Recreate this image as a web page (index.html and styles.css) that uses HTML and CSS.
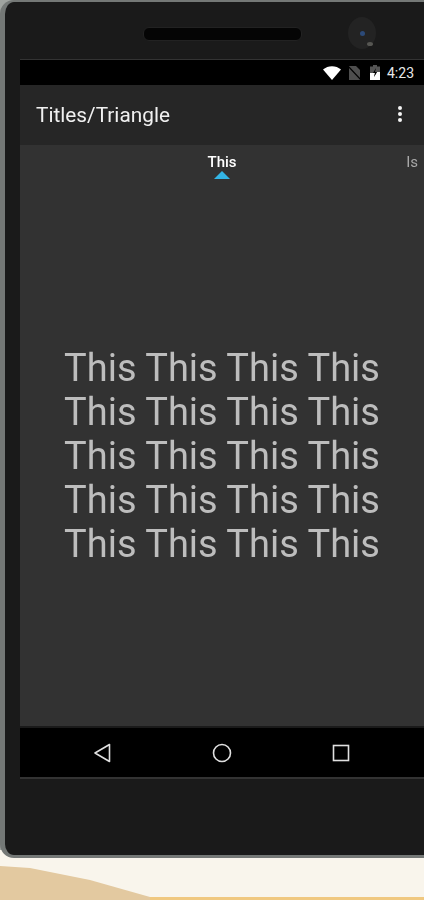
FILE: index.html
```html
<!DOCTYPE html>
<html lang="en">
<head>
<meta charset="utf-8">
<title>Titles/Triangle</title>
<link rel="stylesheet" href="styles.css">
</head>
<body>
<div class="desktop">
  <svg class="dunes" viewBox="0 0 424 50" preserveAspectRatio="none" aria-hidden="true">
    <rect width="424" height="50" fill="#f9f5ec"/>
    <polygon points="0,16 30,18 90,30 150,47 150,50 0,50" fill="#e3c9a0"/>
    <polygon points="150,47 424,47 424,50 150,50" fill="#f0c880"/>
  </svg>
  <div class="device">
    <div class="bezel-top">
      <div class="speaker"></div>
      <div class="camera"><div class="lens"></div><div class="glint"></div></div>
    </div>
    <div class="screen">
      <div class="status-bar">
        <svg class="ic-wifi" viewBox="0 0 18 14"><path d="M0 3.500C5-1 13-1 18 3.500L9 14z" fill="#fff"/></svg>
        <svg class="ic-sim" viewBox="0 0 13 14"><path d="M1 0h7l4 4v10H1z" fill="#4e4e4e"/><path d="M0 0l13 14" stroke="#000" stroke-width="1.200"/></svg>
        <svg class="ic-batt" viewBox="0 0 10 15"><path d="M3 0h4v1.500h3V15H0V1.500h3z" fill="#555"/><path d="M0 8h5l-1 4 3-5h3v8H0z" fill="#fff"/><path d="M6 3L3 8h2l-1 4 3-5H5z" fill="#000"/></svg>
        <span class="clock">4:23</span>
      </div>
      <header class="app-bar">
        <h1 class="title">Titles/Triangle</h1>
        <div class="overflow"><i></i><i></i><i></i></div>
      </header>
      <main class="content">
        <div class="tabs">
          <span class="tab-current">This</span>
          <span class="tab-next">Is</span>
          <div class="triangle"></div>
        </div>
        <div class="pager">
          <p class="pager-text">This This This This<br>This This This This<br>This This This This<br>This This This This<br>This This This This</p>
        </div>
      </main>
      <nav class="nav-bar">
        <svg class="nav-ic" viewBox="0 0 20 20"><path d="M16.500 1.500v17L2 10z" fill="none" stroke="#e0e0e0" stroke-width="1.600" stroke-linejoin="round"/></svg>
        <svg class="nav-ic" viewBox="0 0 20 20"><circle cx="10" cy="10" r="8.500" fill="none" stroke="#e0e0e0" stroke-width="1.600"/></svg>
        <svg class="nav-ic" viewBox="0 0 20 20"><rect x="2.500" y="2.500" width="15" height="15" fill="none" stroke="#e0e0e0" stroke-width="1.600"/></svg>
      </nav>
    </div>
  </div>
</div>
</body>
</html>
```

FILE: styles.css
```css
html, body {
  margin: 0;
  padding: 0;
  background: #f9f5ec;
}
.desktop {
  position: relative;
  width: 424px;
  height: 900px;
  overflow: hidden;
  background: #a0a4a0;
}
.dunes {
  position: absolute;
  left: 0;
  bottom: 0;
  width: 424px;
  height: 50px;
}
.device {
  position: relative;
  box-sizing: border-box;
  width: 440px;
  height: 858px;
  padding: 0 0 0 15px;
  background: #1a1a1a;
  border-style: solid;
  border-color: #747876;
  border-width: 2px 0 3px 5px;
  border-radius: 14px 0 0 14px;
}
.bezel-top {
  position: relative;
  height: 57px;
}
.speaker {
  position: absolute;
  left: 123px;
  top: 25px;
  width: 159px;
  height: 14px;
  box-sizing: border-box;
  background: #050505;
  border: 1px solid #222;
  border-radius: 6px;
}
.camera {
  position: absolute;
  left: 328px;
  top: 15px;
  width: 28px;
  height: 32px;
  border-radius: 50%;
  background: #232323;
  display: flex;
  align-items: center;
  justify-content: center;
}
.lens {
  width: 5px;
  height: 5px;
  border-radius: 50%;
  background: #2c4a78;
}
.glint {
  position: absolute;
  right: 3px;
  bottom: 3px;
  width: 6px;
  height: 4px;
  border-radius: 50%;
  background: #565652;
}
.screen {
  width: 404px;
  height: 717px;
  box-sizing: content-box;
  display: flex;
  flex-direction: column;
  border-top: 1px solid #333;
  border-bottom: 2px solid #333;
  font-family: Roboto, sans-serif;
}
.status-bar {
  height: 25px;
  flex: none;
  background: #000;
  display: flex;
  align-items: center;
  justify-content: flex-end;
  color: #e8e8e8;
  width: 404px;
}
.ic-wifi { width: 18px; height: 14px; margin-right: 7px; }
.ic-sim { width: 13px; height: 14px; margin-right: 9px; }
.ic-batt { width: 10px; height: 15px; margin-right: 7px; }
.clock {
  font-size: 14px;
  margin-right: 10px;
}
.app-bar {
  height: 60px;
  flex: none;
  background: #262626;
  display: flex;
  align-items: center;
  justify-content: space-between;
  padding: 0 22px 0 16px;
}
.title {
  margin: 0 0 1px;
  font-size: 20.800px;
  font-weight: 400;
  color: #f0f0f0;
  will-change: opacity;
}
.overflow {
  display: flex;
  flex-direction: column;
  gap: 2px;
  margin-bottom: 2px;
}
.overflow i {
  display: block;
  width: 4px;
  height: 4px;
  border-radius: 50%;
  background: #f4f4f4;
}
.content {
  flex: 1;
  background: #323232;
  display: flex;
  flex-direction: column;
  min-height: 0;
}
.tabs {
  position: relative;
  height: 36px;
  flex: none;
  font-size: 15px;
  will-change: opacity;
}
.tab-current {
  position: absolute;
  left: 0;
  right: 0;
  top: 8px;
  text-align: center;
  color: #fff;
  font-weight: 500;
}
.tab-next {
  position: absolute;
  right: 6px;
  top: 8px;
  color: #a8a8a8;
}
.triangle {
  position: absolute;
  left: 194px;
  top: 26px;
  width: 0;
  height: 0;
  border-left: 8px solid transparent;
  border-right: 8px solid transparent;
  border-bottom: 8px solid #33b5e5;
}
.pager {
  flex: 1;
  display: flex;
  align-items: center;
  justify-content: center;
  padding-top: 4px;
}
.pager-text {
  margin: 0;
  text-align: center;
  font-size: 38px;
  line-height: 44px;
  color: #bdbdbd;
  white-space: nowrap;
  will-change: opacity;
}
.nav-bar {
  height: 49px;
  flex: none;
  margin-top: 2px;
  background: #000;
  display: flex;
  align-items: center;
  justify-content: center;
  gap: 99px;
}
.nav-ic {
  width: 20px;
  height: 20px;
}
```
